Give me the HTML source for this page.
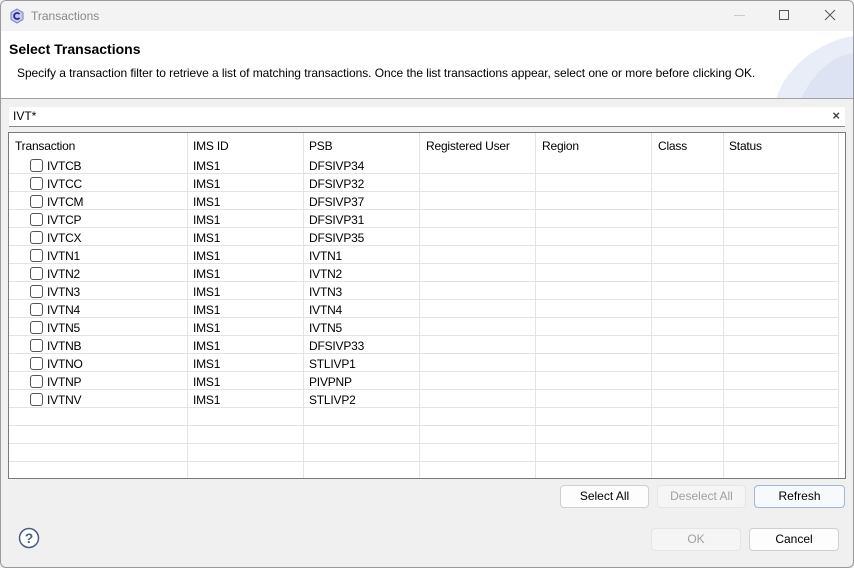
<!DOCTYPE html>
<html><head><style>
*{box-sizing:border-box;margin:0;padding:0}
body{width:854px;height:568px;background:#f0f0f0;font-family:"Liberation Sans",sans-serif;font-size:12px;color:#000;position:relative;overflow:hidden}
.win{position:absolute;left:0;top:0;width:854px;height:568px;border:1px solid #9a9a9a;border-radius:6px;background:#f0f0f0;overflow:hidden}
.title{position:absolute;left:0;top:0;width:852px;height:30px;background:#f3f3f3}
.hdr{position:absolute;left:0;top:30px;width:852px;height:68px;background:#fff;border-bottom:1px solid #a0a0a0;overflow:hidden}
.a{position:absolute}
.inp{position:absolute;left:8px;top:106px;width:836px;height:20px;background:#fff;border-bottom:1px solid #888;font-size:12px;padding:2px 4px}
.tbl{position:absolute;left:7px;top:131px;width:838px;height:347px;background:#fff;border:1px solid #7a7a7a;overflow:hidden}
.row{position:absolute;left:0;width:829px;height:18px;border-bottom:1px solid #e3e3e3}
.vl{position:absolute;top:0;width:1px;height:347px;background:#e3e3e3}
.cell{position:absolute;top:3px;font-size:12px;letter-spacing:-0.2px}
.cb{position:absolute;left:21px;top:3px;width:13px;height:13px;border:1px solid #555;border-radius:3px;background:#fff}
.btn{position:absolute;height:23px;border:1px solid #d0d0d0;border-radius:4px;background:#fdfdfd;text-align:center;line-height:21px;font-size:12px}
</style></head><body><div class="win">
<div class="title">
<svg class="a" style="left:8px;top:7px" width="16" height="16" viewBox="0 0 16 16"><path d="M8 1l6 3.5v7L8 15 2 11.5v-7z" fill="#c9c9ef" stroke="#7b7bd6"/><path d="M10.5 6.2A3 3 0 1 0 10.5 9.8" fill="none" stroke="#2b2b8c" stroke-width="1.8"/></svg>
<div class="a" style="left:30px;top:8px;color:#888;font-size:12px">Transactions</div>
<div class="a" style="left:733px;top:14px;width:11px;height:1px;background:#ccc"></div>
<div class="a" style="left:778px;top:9px;width:10px;height:10px;border:1px solid #555"></div>
<svg class="a" style="left:823px;top:8px" width="12" height="12"><path d="M1 1L11 11M11 1L1 11" stroke="#555" stroke-width="1"/></svg>
</div>
<div class="hdr">
<svg class="a" style="left:740px;top:0" width="112" height="68"><path d="M35 68C45 35 80 10 112 5V68Z" fill="#e9edf7"/><path d="M60 68C70 45 90 25 112 22V68Z" fill="#dde3f3"/></svg>
<div class="a" style="left:8px;top:10px;font-size:14px;font-weight:bold">Select Transactions</div>
<div class="a" style="left:16px;top:35px;font-size:12px;letter-spacing:-0.06px">Specify a transaction filter to retrieve a list of matching transactions. Once the list transactions appear, select one or more before clicking OK.</div>
</div>
<div class="inp">IVT*<span style="position:absolute;right:5px;top:1px;font-weight:bold;color:#444;font-size:13px">×</span></div>
<div class="tbl">
<div class="vl" style="left:178px"></div><div class="vl" style="left:294px"></div><div class="vl" style="left:410px"></div><div class="vl" style="left:526px"></div><div class="vl" style="left:642px"></div><div class="vl" style="left:714px"></div><div class="vl" style="left:829px"></div>
<div class="cell" style="left:6px;top:6px">Transaction</div><div class="cell" style="left:184px;top:6px">IMS ID</div><div class="cell" style="left:300px;top:6px">PSB</div><div class="cell" style="left:417px;top:6px">Registered User</div><div class="cell" style="left:533px;top:6px">Region</div><div class="cell" style="left:649px;top:6px">Class</div><div class="cell" style="left:720px;top:6px">Status</div>
<div class="row" style="top:23px"><span class="cb"></span><span class="cell" style="left:38px">IVTCB</span><span class="cell" style="left:184px">IMS1</span><span class="cell" style="left:300px">DFSIVP34</span></div>
<div class="row" style="top:41px"><span class="cb"></span><span class="cell" style="left:38px">IVTCC</span><span class="cell" style="left:184px">IMS1</span><span class="cell" style="left:300px">DFSIVP32</span></div>
<div class="row" style="top:59px"><span class="cb"></span><span class="cell" style="left:38px">IVTCM</span><span class="cell" style="left:184px">IMS1</span><span class="cell" style="left:300px">DFSIVP37</span></div>
<div class="row" style="top:77px"><span class="cb"></span><span class="cell" style="left:38px">IVTCP</span><span class="cell" style="left:184px">IMS1</span><span class="cell" style="left:300px">DFSIVP31</span></div>
<div class="row" style="top:95px"><span class="cb"></span><span class="cell" style="left:38px">IVTCX</span><span class="cell" style="left:184px">IMS1</span><span class="cell" style="left:300px">DFSIVP35</span></div>
<div class="row" style="top:113px"><span class="cb"></span><span class="cell" style="left:38px">IVTN1</span><span class="cell" style="left:184px">IMS1</span><span class="cell" style="left:300px">IVTN1</span></div>
<div class="row" style="top:131px"><span class="cb"></span><span class="cell" style="left:38px">IVTN2</span><span class="cell" style="left:184px">IMS1</span><span class="cell" style="left:300px">IVTN2</span></div>
<div class="row" style="top:149px"><span class="cb"></span><span class="cell" style="left:38px">IVTN3</span><span class="cell" style="left:184px">IMS1</span><span class="cell" style="left:300px">IVTN3</span></div>
<div class="row" style="top:167px"><span class="cb"></span><span class="cell" style="left:38px">IVTN4</span><span class="cell" style="left:184px">IMS1</span><span class="cell" style="left:300px">IVTN4</span></div>
<div class="row" style="top:185px"><span class="cb"></span><span class="cell" style="left:38px">IVTN5</span><span class="cell" style="left:184px">IMS1</span><span class="cell" style="left:300px">IVTN5</span></div>
<div class="row" style="top:203px"><span class="cb"></span><span class="cell" style="left:38px">IVTNB</span><span class="cell" style="left:184px">IMS1</span><span class="cell" style="left:300px">DFSIVP33</span></div>
<div class="row" style="top:221px"><span class="cb"></span><span class="cell" style="left:38px">IVTNO</span><span class="cell" style="left:184px">IMS1</span><span class="cell" style="left:300px">STLIVP1</span></div>
<div class="row" style="top:239px"><span class="cb"></span><span class="cell" style="left:38px">IVTNP</span><span class="cell" style="left:184px">IMS1</span><span class="cell" style="left:300px">PIVPNP</span></div>
<div class="row" style="top:257px"><span class="cb"></span><span class="cell" style="left:38px">IVTNV</span><span class="cell" style="left:184px">IMS1</span><span class="cell" style="left:300px">STLIVP2</span></div>
<div class="row" style="top:275px"></div><div class="row" style="top:293px"></div><div class="row" style="top:311px"></div><div class="row" style="top:329px"></div>
</div>
<div class="btn" style="left:559px;top:484px;width:89px">Select All</div>
<div class="btn" style="left:656px;top:484px;width:89px;color:#a0a0a0;background:#f5f5f5;border-color:#e5e5e5">Deselect All</div>
<div class="btn" style="left:753px;top:484px;width:91px;border-color:#9fb8d3;background:#f7f9fc">Refresh</div>
<div class="btn" style="left:650px;top:527px;width:90px;color:#a0a0a0;background:#f5f5f5;border-color:#e5e5e5">OK</div>
<div class="btn" style="left:748px;top:527px;width:90px">Cancel</div>
<svg class="a" style="left:17px;top:526px" width="22" height="22"><circle cx="11" cy="11" r="9.5" fill="#fff" stroke="#4a5d80" stroke-width="1.5"/><text x="11" y="16" text-anchor="middle" font-family="Liberation Sans" font-weight="bold" font-size="14" fill="#4a5d80">?</text></svg>
</div></body></html>
